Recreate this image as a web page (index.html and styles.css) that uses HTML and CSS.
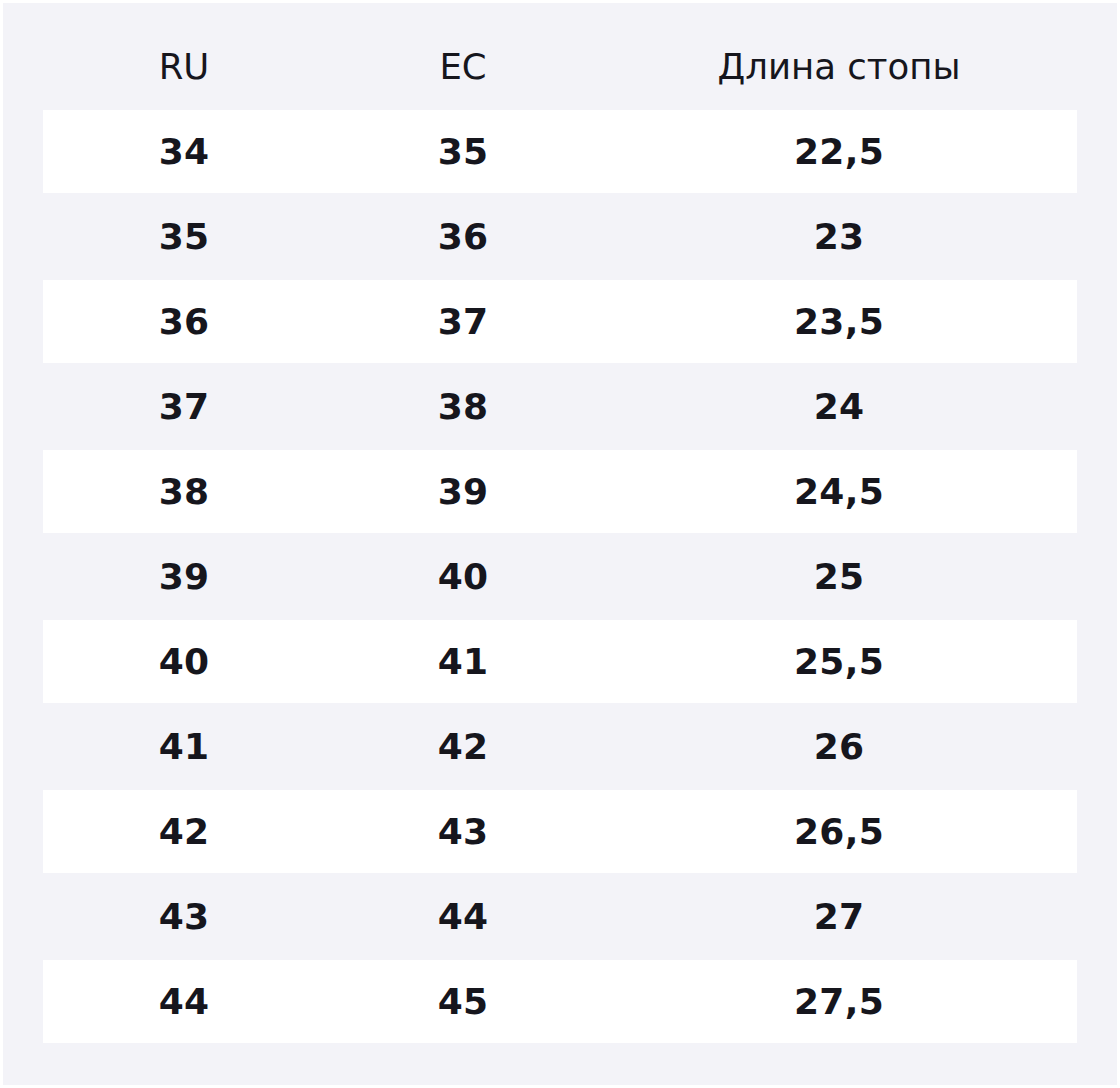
FILE: index.html
```html
<!DOCTYPE html>
<html lang="ru">
<head>
<meta charset="utf-8">
<title>Размеры</title>
<link rel="stylesheet" href="styles.css">
</head>
<body>
<div class="sheet">
  <div class="table">
    <div class="row head"><div class="cell">RU</div><div class="cell">EC</div><div class="cell">Длина стопы</div></div>
    <div class="row odd"><div class="cell">34</div><div class="cell">35</div><div class="cell">22,5</div></div>
    <div class="row even"><div class="cell">35</div><div class="cell">36</div><div class="cell">23</div></div>
    <div class="row odd"><div class="cell">36</div><div class="cell">37</div><div class="cell">23,5</div></div>
    <div class="row even"><div class="cell">37</div><div class="cell">38</div><div class="cell">24</div></div>
    <div class="row odd"><div class="cell">38</div><div class="cell">39</div><div class="cell">24,5</div></div>
    <div class="row even"><div class="cell">39</div><div class="cell">40</div><div class="cell">25</div></div>
    <div class="row odd"><div class="cell">40</div><div class="cell">41</div><div class="cell">25,5</div></div>
    <div class="row even"><div class="cell">41</div><div class="cell">42</div><div class="cell">26</div></div>
    <div class="row odd"><div class="cell">42</div><div class="cell">43</div><div class="cell">26,5</div></div>
    <div class="row even"><div class="cell">43</div><div class="cell">44</div><div class="cell">27</div></div>
    <div class="row odd"><div class="cell">44</div><div class="cell">45</div><div class="cell">27,5</div></div>
  </div>
</div>
</body>
</html>
```
FILE: styles.css
```css
html, body {
  margin: 0;
  padding: 0;
  background: #ffffff;
}
body {
  padding: 3px;
  font-family: "DejaVu Sans", sans-serif;
  color: #16161d;
}
.sheet {
  background: #f3f3f8;
  height: 1082px;
  box-sizing: border-box;
  padding: 40px 40px 42px;
}
.table {
  display: flex;
  flex-direction: column;
}
.row {
  display: grid;
  grid-template-columns: 282px 276px 1fr;
  align-items: center;
  font-size: 36px;
}
.cell {
  text-align: center;
  line-height: 1;
}
.head {
  height: 67px;
  box-sizing: border-box;
  padding-bottom: 19px;
  font-weight: normal;
  font-size: 35.5px;
}
.odd,
.even {
  font-weight: bold;
  letter-spacing: 0.3px;
  padding-top: 1px;
  box-sizing: border-box;
}
.odd {
  height: 83px;
  background: #ffffff;
}
.even {
  height: 87px;
}
```
